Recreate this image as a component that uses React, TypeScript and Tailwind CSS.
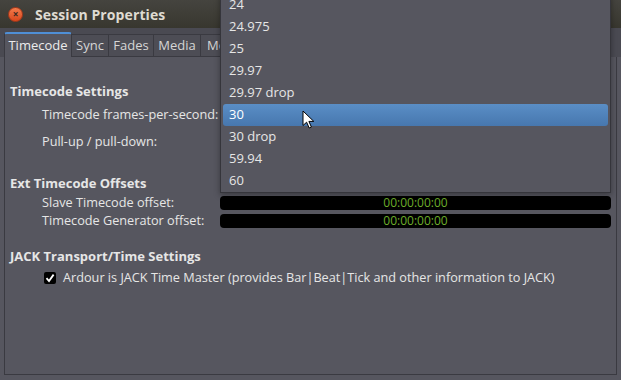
import React from 'react';

const rates = ['24', '24.975', '25', '29.97', '29.97 drop', '30', '30 drop', '59.94', '60'];

const tabs = [
  { label: 'Sync', w: 'w-[37px]' },
  { label: 'Fades', w: 'w-[45px]' },
  { label: 'Media', w: 'w-[47px]' },
  { label: 'Monitoring', w: 'w-[80px]' },
  { label: 'Meterbridge', w: 'w-[86px]' },
];

function Clock() {
  return (
    <div className="h-[14px] w-[391px] rounded-[4px] bg-black flex items-center justify-center text-[12px] leading-none text-[#6cae2a]">
      00:00:00:00
    </div>
  );
}

export default function App() {
  return (
    <div className="relative w-[621px] h-[380px] overflow-hidden bg-[#56565f] font-['Open_Sans',sans-serif] text-[12.7px] text-[#e6e6e6]">
      {/* title bar */}
      <div className="h-[28px] flex items-center bg-gradient-to-b from-[#45443f] to-[#38372f]">
        <div className="ml-[8px] w-[15px] h-[15px] rounded-full bg-gradient-to-b from-[#f27b4b] to-[#d9461a] border border-[#a8391a] flex items-center justify-center text-[10px] leading-none font-bold text-[#3a2a22]">
          ×
        </div>
        <span className="ml-[12px] text-[14px] font-bold text-[#dfdbd2] tracking-[0.1px]">Session Properties</span>
      </div>

      {/* tabs */}
      <div className="h-[29px] bg-[#4a4a52] flex items-end pl-[4px] text-[13px]">
        <div className="w-[68px] h-[25px] bg-[#56565f] border-t-2 border-[#4f8fd6] border-l border-r border-l-[#3a3a41] border-r-[#3a3a41] rounded-t-[3px] flex items-center justify-center text-[#ececec]">
          Timecode
        </div>
        {tabs.map(t => (
          <div key={t.label} className={`${t.w} h-[23px] bg-[#4d4d55] border border-[#3a3a41] border-l-0 flex items-center justify-center text-[#d6d6d6] overflow-hidden whitespace-nowrap`}>
            {t.label}
          </div>
        ))}
      </div>

      {/* notebook page */}
      <div className="ml-[4px] w-[613px] h-[318px] border border-t-0 border-[#3a3a41] pt-[26px]">
        <div className="pl-[5px] h-[18px] flex items-center font-bold text-[13px]">Timecode Settings</div>
        <div className="mt-[1px] h-[26px] pl-[37px] flex items-center">Timecode frames-per-second:</div>
        <div className="mt-[1px] h-[26px] pl-[37px] flex items-center">Pull-up / pull-down:</div>

        <div className="mt-[20px] pl-[5px] h-[18px] flex items-center font-bold text-[13px]">Ext Timecode Offsets</div>
        <div className="h-[18px] pl-[37px] grid grid-cols-[178px_391px] items-center">
          <span>Slave Timecode offset:</span>
          <Clock />
        </div>
        <div className="h-[18px] pl-[37px] grid grid-cols-[178px_391px] items-center">
          <span>Timecode Generator offset:</span>
          <Clock />
        </div>

        <div className="mt-[19px] pl-[5px] h-[18px] flex items-center font-bold text-[13px]">JACK Transport/Time Settings</div>
        <div className="mt-[3px] h-[18px] pl-[39px] flex items-center gap-[7px]">
          <div className="w-[12px] h-[12px] bg-black rounded-[2px] flex items-center justify-center">
            <svg width="10" height="10" viewBox="0 0 10 10">
              <path d="M1.5 5.2 L4 8 L8.6 1.6" fill="none" stroke="#ffffff" strokeWidth="1.8" />
            </svg>
          </div>
          <span>Ardour is JACK Time Master (provides Bar|Beat|Tick and other information to JACK)</span>
        </div>
      </div>

      {/* dropdown popup */}
      <div className="absolute left-[220px] top-[-7px] w-[391px] h-[200px] bg-[#56565f] border border-[#35353b] shadow-[0_2px_6px_rgba(0,0,0,0.35)] text-[13px]">
        {rates.map(r => (
          r === '30' ? (
            <div key={r} className="mx-[2px] h-[22px] pl-[6px] flex items-center rounded-[3px] bg-gradient-to-b from-[#5a8ec6] to-[#4777ae] text-white">
              {r}
            </div>
          ) : (
            <div key={r} className="h-[22px] pl-[8px] flex items-center text-[#e6e6e6]">
              {r}
            </div>
          )
        ))}
      </div>

      {/* mouse pointer */}
      <svg className="absolute left-[302px] top-[110px]" width="14" height="20" viewBox="0 0 14 20">
        <path d="M1 1 L1 15.5 L4.6 12.2 L7.2 18 L9.4 17 L6.9 11.4 L11.8 11.4 Z" fill="#ffffff" stroke="#000000" strokeWidth="1" strokeLinejoin="round" />
      </svg>
    </div>
  );
}
